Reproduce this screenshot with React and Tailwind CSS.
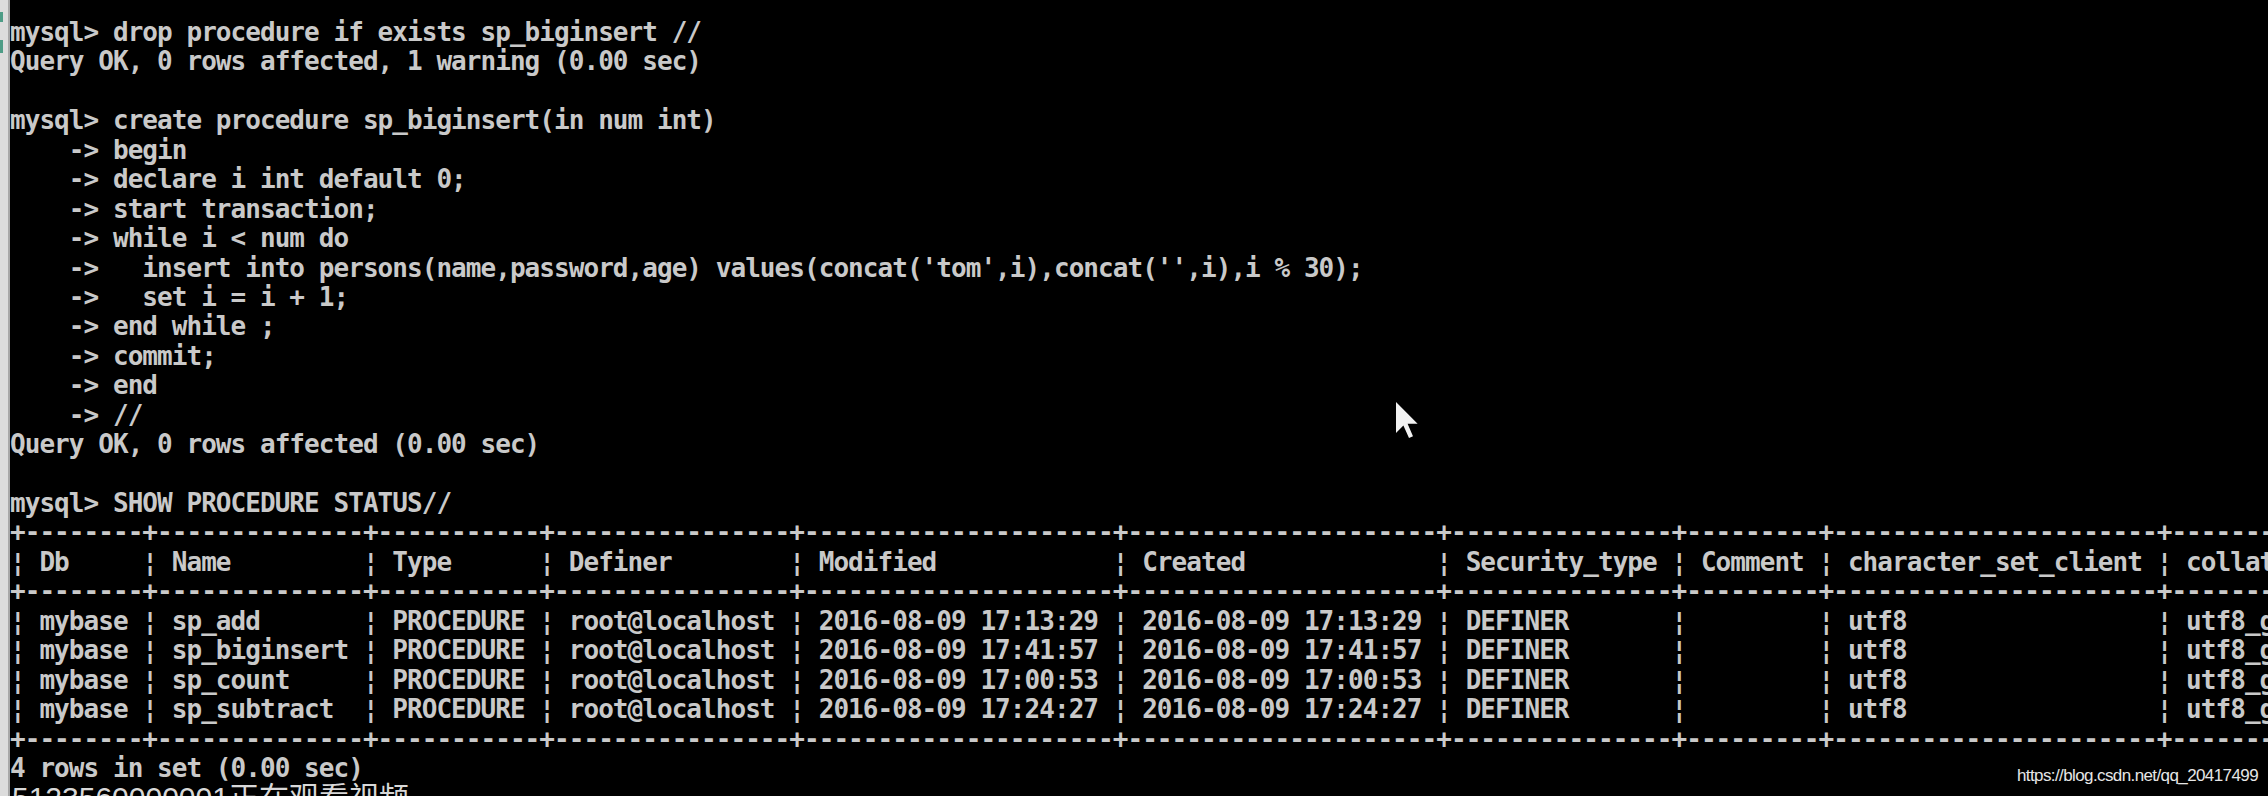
import React from "react";

const cols = [
  { h: "Db", w: 6 },
  { h: "Name", w: 12 },
  { h: "Type", w: 9 },
  { h: "Definer", w: 14 },
  { h: "Modified", w: 19 },
  { h: "Created", w: 19 },
  { h: "Security_type", w: 13 },
  { h: "Comment", w: 7 },
  { h: "character_set_client", w: 20 },
  { h: "collation_connection", w: 20 },
  { h: "Database Collation", w: 18 },
];

const data = [
  ["mybase", "sp_add", "PROCEDURE", "root@localhost", "2016-08-09 17:13:29", "2016-08-09 17:13:29", "DEFINER", "", "utf8", "utf8_general_ci", "utf8_general_ci"],
  ["mybase", "sp_biginsert", "PROCEDURE", "root@localhost", "2016-08-09 17:41:57", "2016-08-09 17:41:57", "DEFINER", "", "utf8", "utf8_general_ci", "utf8_general_ci"],
  ["mybase", "sp_count", "PROCEDURE", "root@localhost", "2016-08-09 17:00:53", "2016-08-09 17:00:53", "DEFINER", "", "utf8", "utf8_general_ci", "utf8_general_ci"],
  ["mybase", "sp_subtract", "PROCEDURE", "root@localhost", "2016-08-09 17:24:27", "2016-08-09 17:24:27", "DEFINER", "", "utf8", "utf8_general_ci", "utf8_general_ci"],
];

const sep = "+" + cols.map((c) => "-".repeat(c.w + 2)).join("+") + "+";
const row = (vals) =>
  "\u00a6" + vals.map((v, i) => " " + v.padEnd(cols[i].w, " ") + " ").join("\u00a6") + "\u00a6";

const lines = [
  "mysql> drop procedure if exists sp_biginsert //",
  "Query OK, 0 rows affected, 1 warning (0.00 sec)",
  "",
  "mysql> create procedure sp_biginsert(in num int)",
  "    -> begin",
  "    -> declare i int default 0;",
  "    -> start transaction;",
  "    -> while i < num do",
  "    ->   insert into persons(name,password,age) values(concat('tom',i),concat('',i),i % 30);",
  "    ->   set i = i + 1;",
  "    -> end while ;",
  "    -> commit;",
  "    -> end",
  "    -> //",
  "Query OK, 0 rows affected (0.00 sec)",
  "",
  "mysql> SHOW PROCEDURE STATUS//",
  sep,
  row(cols.map((c) => c.h)),
  sep,
  ...data.map(row),
  sep,
  "4 rows in set (0.00 sec)",
];

function Cursor() {
  return (
    <svg
      className="absolute left-[1395px] top-[401px]"
      width="24"
      height="38"
      viewBox="0 0 12 19"
    >
      <polygon
        points="0.5,0.5 0.5,16 4.2,12.3 7,18.5 9,17.6 6.3,11.4 11.3,11.4"
        fill="#f2f2f2"
      />
    </svg>
  );
}

export default function App() {
  return (
    <div className="relative w-[2268px] h-[796px] overflow-hidden bg-black flex">
      <div className="w-[10px] shrink-0 h-full bg-[#dcdcdc] border-r-[2px] border-[#a8a8a8] flex flex-col">
        <div className="h-[12px]" />
        <div className="h-[10px] w-[3px] bg-[#4d9c86]" />
        <div className="h-[18px]" />
        <div className="h-[13px] w-[3px] bg-[#4d9c86]" />
      </div>
      <div
        className="flex-1 pt-[18px] text-[#c9c9c9] text-[26px] font-bold leading-[29.44px] tracking-[-0.95px] whitespace-pre overflow-hidden"
        style={{ fontFamily: '"DejaVu Sans Mono", "Liberation Mono", monospace' }}
      >
        {lines.map((l, i) => (
          <div key={i} className="h-[29.44px]">
            {l || " "}
          </div>
        ))}
      </div>
      <Cursor />
      <div
        className="absolute left-[12px] top-[783px] text-[30px] leading-[30px] text-[#d8d8d8] whitespace-nowrap"
        style={{ fontFamily: '"Liberation Sans", "Noto Sans CJK SC", sans-serif' }}
      >
        5123560000001正在观看视频
      </div>
      <div
        className="absolute right-[10px] top-[765px] text-[17px] leading-[22px] text-[#e6e6e6] tracking-[-0.6px] whitespace-nowrap"
        style={{ fontFamily: '"Liberation Sans", Arial, sans-serif' }}
      >
        https://blog.csdn.net/qq_20417499
      </div>
    </div>
  );
}
